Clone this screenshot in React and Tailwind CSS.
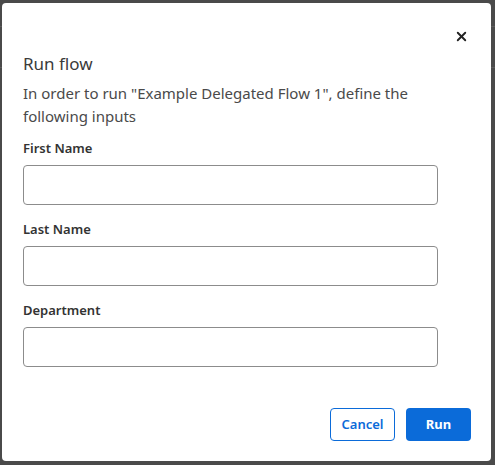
import { X } from 'lucide-react'

const fields = ['First Name', 'Last Name', 'Department']

export default function App() {
  return (
    <div
      className="relative w-[495px] h-[465px] overflow-hidden bg-[#4a4a4a]"
      style={{ fontFamily: '"Noto Sans", "Open Sans", sans-serif' }}
    >
      {/* rows of the page behind the overlay */}
      <div className="h-[27px] border-b border-[#5c5c5c]" />
      <div className="h-[41px] border-b border-[#5c5c5c]" />

      <div className="absolute left-[2px] top-[3px] w-[489px] h-[458px] rounded-[4px] bg-white flex flex-col">
        <div className="flex justify-end pt-[26px] pr-[22px]">
          <button className="text-[#222]">
            <X className="w-[15px] h-[15px]" strokeWidth={3} />
          </button>
        </div>

        <div className="px-[21px]">
          <h2 className="text-[17px] leading-[24px] text-[#3a3a3a] mt-[8px]">Run flow</h2>
          <p className="text-[15px] leading-[23px] text-[#4a4a4a] mt-[6px]">
            In order to run "Example Delegated Flow 1", define the following inputs
          </p>

          <div className="mt-[10px] flex flex-col gap-[14px]">
            {fields.map((f) => (
              <div key={f}>
                <label className="block text-[13px] leading-[20px] font-semibold text-[#333]">{f}</label>
                <input
                  type="text"
                  className="mt-[7px] block w-[415px] h-[40px] rounded-[4px] border border-[#8c8c8c] px-3 text-sm outline-none"
                />
              </div>
            ))}
          </div>
        </div>

        <div className="mt-auto mb-[20px] mr-[20px] flex justify-end gap-[11px]">
          <button className="w-[65px] h-[33px] rounded-[4px] border border-[#0b6bd9] text-[#0b6bd9] text-[13px] font-semibold">
            Cancel
          </button>
          <button className="w-[65px] h-[33px] rounded-[4px] bg-[#0b6bd9] text-white text-[13px] font-bold">
            Run
          </button>
        </div>
      </div>
    </div>
  )
}
